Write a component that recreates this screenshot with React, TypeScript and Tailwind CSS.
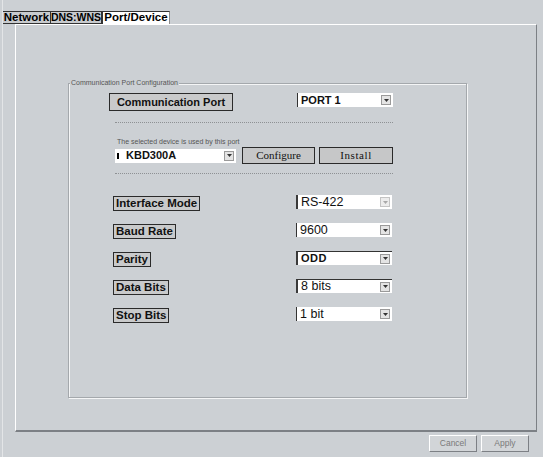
import React from "react";

const FONT = { fontFamily: '"Liberation Sans", Arial, sans-serif' };
const SERIF = { fontFamily: '"Liberation Serif", "Times New Roman", serif' };

type SelectProps = {
  value: string;
  width: string;
  textClass: string;
  disabled?: boolean;
  top?: boolean;
  marker?: boolean;
  thin?: boolean;
};

function DropArrow({ disabled }: { disabled?: boolean }) {
  return (
    <span
      className={`flex h-[10px] w-[10px] items-center justify-center border ${
        disabled ? "border-[#c4c4c4] bg-[#ececec]" : "border-[#9a9a9a] bg-[#e4e4e4]"
      }`}
    >
      <svg width="5" height="3" viewBox="0 0 5 3">
        <path d="M0 0h5L2.5 3z" fill={disabled ? "#a8a8a8" : "#333"} />
      </svg>
    </span>
  );
}

function Select({ value, width, textClass, disabled, top, marker, thin }: SelectProps) {
  return (
    <div
      className={`flex h-[14px] ${width} items-center justify-between bg-white pr-[2px] ${
        marker ? "border-l-0" : thin ? "border-l border-[#333]" : "border-l-2 border-[#3a3a3a]"
      } ${top ? "border-t border-t-[#333]" : ""} ${marker ? "pl-[2px]" : "pl-[3px]"}`}
    >
      <span className="flex items-center">
        {marker && <span className="mr-[7px] h-[6px] w-[2px] bg-black" />}
        <span className={`leading-none text-[#111] ${textClass}`}>{value}</span>
      </span>
      <DropArrow disabled={disabled} />
    </div>
  );
}

function LabelBox({ text }: { text: string }) {
  return (
    <div className="flex h-[15px] items-center border-[1.5px] border-[#2a2a2a] bg-[#c9cacb] px-[2px] text-[11.5px] font-bold leading-none text-[#111]">
      {text}
    </div>
  );
}

const ROWS = [
  { label: "Interface Mode", value: "RS-422", textClass: "text-[12.5px]", disabled: true },
  { label: "Baud Rate", value: "9600", textClass: "text-[12.5px]", thin: true },
  { label: "Parity", value: "ODD", textClass: "text-[11px] font-bold tracking-[0.5px]", top: true },
  { label: "Data Bits", value: "8 bits", textClass: "text-[12.5px]", top: true },
  { label: "Stop Bits", value: "1 bit", textClass: "text-[12.5px]", thin: true },
];

export default function App() {
  return (
    <div className="h-[457px] w-[543px] overflow-hidden bg-[#ccd0d4] pl-[2px]" style={FONT}>
      <div className="flex h-full flex-col border-l border-[#e3e5e7]">
        {/* tabs */}
        <div className="mt-[11px] flex h-[13px] items-stretch text-[11.5px] font-bold leading-none text-black">
          <div className="flex w-[48px] items-center justify-center border border-l-0 border-[#333] bg-[#c8cbce]">
            Network
          </div>
          <div className="flex w-[51px] items-center justify-center border border-l-0 border-[#333] bg-[#c8cbce] text-[10.5px]">
            DNS:WNS
          </div>
          <div className="flex w-[68px] items-center justify-center border border-b-0 border-r-[#8a8a8a] border-l-[#333] border-t-[#333] bg-white">
            Port/Device
          </div>
        </div>

        {/* panel */}
        <div className="ml-[12px] h-[408px] w-[522px] border-b-2 border-l border-r border-t border-b-[#7c8085] border-l-white border-r-[#7c8085] border-t-white">
          <div className="relative ml-[52px] mt-[58px] h-[315px] w-[399px] border border-[#a4a8ac] shadow-[inset_1px_1px_0_#f4f5f6,1px_1px_0_#f4f5f6]">
            <span className="absolute -top-[5px] left-[1px] bg-[#ccd0d4] px-[1px] text-[7px] leading-[8px] text-[#555]">
              Communication Port Configuration
            </span>

            <div className="ml-[40px] mt-[9px] flex h-[18px] items-start">
              <div className="w-[188px]">
                <div className="flex h-[18px] w-[124px] items-center justify-center border-[1.5px] border-[#2a2a2a] bg-[#c9cacb] text-[11px] font-bold leading-none text-[#111]">
                  Communication Port
                </div>
              </div>
              <Select value="PORT 1" width="w-[96px]" textClass="text-[11px] font-bold" thin />
            </div>

            <div className="ml-[46px] mt-[11px] w-[278px] border-t border-dotted border-[#8e9194]" />

            <div className="ml-[48px] mt-[15px] text-[7px] leading-[8px] text-[#555]">
              The selected device is used by this port
            </div>

            <div className="ml-[46px] mt-[1px] flex h-[17px] items-center">
              <Select value="KBD300A" width="w-[121px]" textClass="text-[11px] font-bold" marker />
              <button
                className="ml-[6px] flex h-[17px] w-[73px] items-center justify-center border-[1.5px] border-[#2a2a2a] bg-[#c6c7c8] text-[11px] leading-none text-[#111]"
                style={SERIF}
              >
                Configure
              </button>
              <button
                className="ml-[4px] flex h-[17px] w-[74px] items-center justify-center border-[1.5px] border-[#2a2a2a] bg-[#c6c7c8] text-[11px] leading-none tracking-[0.6px] text-[#111]"
                style={SERIF}
              >
                Install
              </button>
            </div>

            <div className="ml-[46px] mt-[9px] w-[278px] border-t border-dotted border-[#8e9194]" />

            <div className="ml-[44px] mt-[14px] flex flex-col">
              {ROWS.map((r) => (
                <div key={r.label} className="flex h-[28px] items-center">
                  <div className="w-[183px]">
                    <div className="inline-flex">
                      <LabelBox text={r.label} />
                    </div>
                  </div>
                  <Select
                    value={r.value}
                    width="w-[96px]"
                    textClass={r.textClass}
                    disabled={r.disabled}
                    top={r.top}
                    thin={r.thin}
                  />
                </div>
              ))}
            </div>
          </div>
        </div>

        {/* footer buttons */}
        <div className="mt-[3px] flex justify-end gap-[4px] pr-[14px]">
          {["Cancel", "Apply"].map((b) => (
            <button
              key={b}
              className="flex h-[17px] w-[48px] items-center justify-center border border-b-[#7d8085] border-l-white border-r-[#7d8085] border-t-white bg-[#d2d5d8] text-[8.5px] leading-none text-[#7a7a7a]"
            >
              {b}
            </button>
          ))}
        </div>
      </div>
    </div>
  );
}
